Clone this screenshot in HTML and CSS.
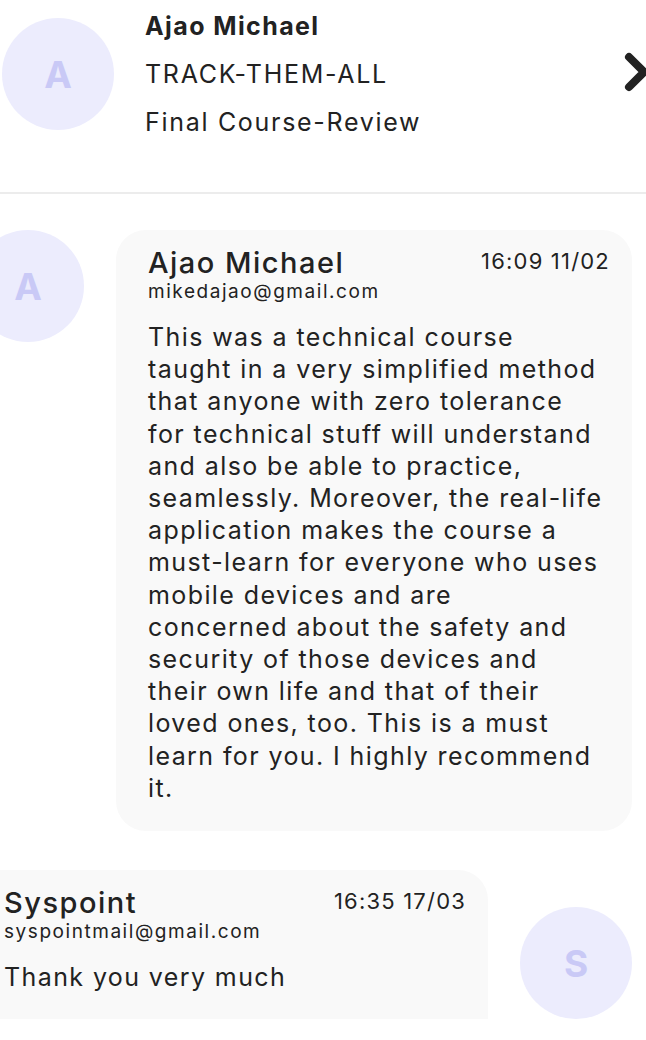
FILE: index.html
```html
<!DOCTYPE html>
<html lang="en">
<head>
<meta charset="utf-8">
<title>Final Course-Review</title>
<link rel="stylesheet" href="styles.css">
</head>
<body>
<header class="thread-head">
  <div class="avatar">A</div>
  <div class="thread-info">
    <div class="thread-name">Ajao Michael</div>
    <div class="thread-line">TRACK-THEM-ALL</div>
    <div class="thread-line">Final Course-Review</div>
  </div>
  <svg class="chevron" width="28" height="40" viewBox="0 0 28 40" aria-hidden="true">
    <polyline points="8,5 23,20 8,35" fill="none" stroke="#222222" stroke-width="8" stroke-linecap="round" stroke-linejoin="round"/>
  </svg>
</header>
<main class="messages">
  <div class="msg msg-in">
    <div class="avatar">A</div>
    <div class="bubble">
      <div class="bubble-head">
        <div class="who">
          <div class="who-name">Ajao Michael</div>
          <div class="who-mail">mikedajao@gmail.com</div>
        </div>
        <div class="time">16:09 11/02</div>
      </div>
      <p class="body-text">This was a technical course<br>
taught in a very simplified method<br>
that anyone with zero tolerance<br>
for technical stuff will understand<br>
and also be able to practice,<br>
seamlessly. Moreover, the real-life<br>
application makes the course a<br>
must-learn for everyone who uses<br>
mobile devices and are<br>
concerned about the safety and<br>
security of those devices and<br>
their own life and that of their<br>
loved ones, too. This is a must<br>
learn for you. I highly recommend<br>
it.</p>
    </div>
  </div>
  <div class="msg msg-out">
    <div class="bubble bubble-out">
      <div class="bubble-head">
        <div class="who">
          <div class="who-name">Syspoint</div>
          <div class="who-mail">syspointmail@gmail.com</div>
        </div>
        <div class="time">16:35 17/03</div>
      </div>
      <p class="body-text">Thank you very much</p>
    </div>
    <div class="avatar">S</div>
  </div>
</main>
</body>
</html>
```

FILE: styles.css
```css
html, body {
  margin: 0;
  padding: 0;
  overflow: hidden;
  background: #ffffff;
}
body {
  font-family: Inter, "Noto Sans", "Liberation Sans", sans-serif;
  color: #222222;
  width: 646px;
}
.avatar {
  flex: 0 0 112px;
  width: 112px;
  height: 112px;
  border-radius: 50%;
  background: #ececfd;
  color: #c9c9f6;
  font-size: 37px;
  font-weight: 700;
  display: flex;
  align-items: center;
  justify-content: center;
}
.thread-head {
  display: flex;
  align-items: center;
  padding: 2px 0 46px 2px;
  border-bottom: 2px solid #ececec;
}
.thread-info {
  flex: 1;
  margin-left: 31px;
  font-size: 25px;
  line-height: 48px;
  letter-spacing: 1.7px;
}
.thread-name {
  font-weight: 700;
  letter-spacing: 1.4px;
}
.chevron {
  flex: 0 0 28px;
  margin-right: -3px;
  margin-top: -4px;
}
.messages {
  display: flex;
  flex-direction: column;
  gap: 39px;
  width: 660px;
  margin-left: -28px;
  padding-top: 36px;
}
.msg {
  display: flex;
  gap: 32px;
}
.msg-in {
  align-items: flex-start;
}
.msg-out {
  align-items: flex-end;
}
.bubble {
  flex: 0 0 516px;
  box-sizing: border-box;
  background: #f9f9f9;
  border-radius: 30px;
  padding: 16px 22px 27px 32px;
}
.bubble-out {
  border-radius: 30px 30px 0 30px;
  padding-bottom: 26px;
}
.bubble-head {
  display: flex;
  justify-content: space-between;
  align-items: flex-start;
}
.who-name {
  font-size: 29px;
  font-weight: 500;
  line-height: 34px;
  letter-spacing: 1.5px;
}
.who-mail {
  font-size: 19px;
  line-height: 23px;
  letter-spacing: 1.55px;
}
.time {
  font-size: 22px;
  line-height: 27px;
  margin-top: 2px;
  letter-spacing: 1.2px;
}
.body-text {
  margin: 18px 0 0 0;
  font-size: 25px;
  line-height: 32.2px;
  letter-spacing: 1.4px;
  white-space: nowrap;
}
```
